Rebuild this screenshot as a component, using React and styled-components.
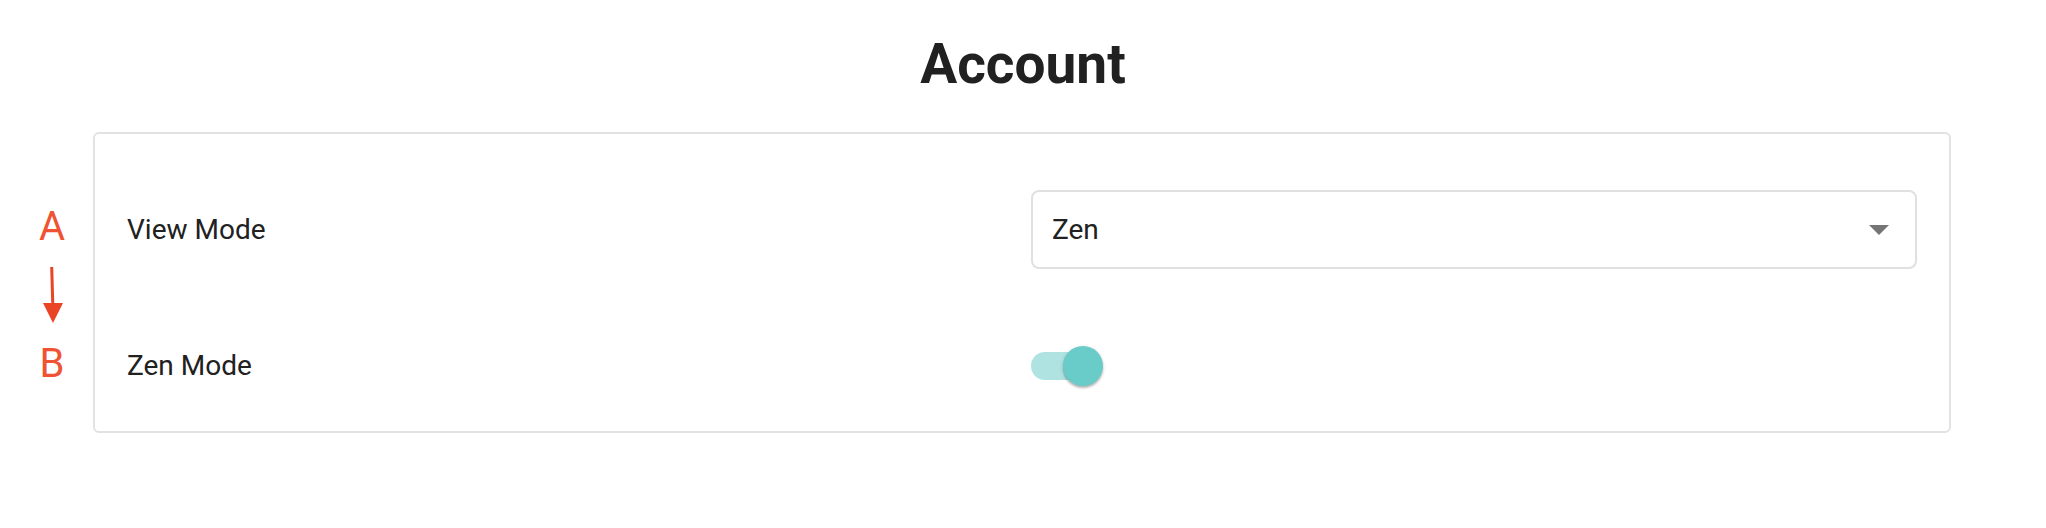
import React from "react";
import styled, { createGlobalStyle } from "styled-components";

const GlobalStyle = createGlobalStyle`
  html, body {
    margin: 0;
    padding: 0;
    background: #ffffff;
  }
  body {
    font-family: Roboto, "Liberation Sans", Arial, sans-serif;
    color: #212121;
  }
`;

const Page = styled.div`
  width: 2046px;
  min-height: 528px;
  display: flex;
  flex-direction: column;
`;

const Title = styled.h1`
  margin: 0 0 40px;
  padding-top: 37px;
  font-size: 55px;
  line-height: 1;
  font-weight: 700;
  text-align: center;
  color: #212121;
`;

const Main = styled.div`
  display: flex;
  align-items: flex-start;
  padding-right: 95px;
`;

const Gutter = styled.div`
  width: 93px;
  box-sizing: border-box;
  padding: 75px 0 0 11px;
  display: flex;
  flex-direction: column;
  align-items: center;
`;

const Marker = styled.div`
  font-size: 40px;
  line-height: 1;
  font-weight: 400;
  color: #ef5333;
`;

const Arrow = styled.svg`
  display: block;
  margin: 20px 0 21px;
`;

const Card = styled.section`
  flex: 1;
  box-sizing: border-box;
  border: 2px solid #e2e2e2;
  border-radius: 6px;
  padding: 56px 32px 45px;
  display: flex;
  flex-direction: column;
  gap: 77px;
`;

const Row = styled.div`
  display: grid;
  grid-template-columns: 1fr 1fr;
  column-gap: 18px;
  align-items: center;
`;

const Label = styled.div`
  font-size: 28px;
  line-height: 1;
  color: #212121;
`;

const Select = styled.div`
  height: 79px;
  box-sizing: border-box;
  border: 2px solid #e0e0e0;
  border-radius: 8px;
  padding: 0 26px 0 19px;
  display: flex;
  align-items: center;
  justify-content: space-between;
  font-size: 28px;
  line-height: 1;
  color: #212121;
`;

const Caret = styled.span`
  width: 0;
  height: 0;
  border-left: 10px solid transparent;
  border-right: 10px solid transparent;
  border-top: 10px solid #757575;
`;

const Switch = styled.div`
  position: relative;
  width: 72px;
  height: 40px;
`;

const Track = styled.span`
  position: absolute;
  left: 0;
  top: 6px;
  width: 66px;
  height: 28px;
  border-radius: 14px;
  background: #afe3e2;
`;

const Thumb = styled.span`
  position: absolute;
  left: 32px;
  top: 0;
  width: 40px;
  height: 40px;
  border-radius: 50%;
  background: #69ccc9;
  box-shadow: 0 2px 2px rgba(0, 0, 0, 0.22), 0 1px 4px rgba(0, 0, 0, 0.12);
`;

export default function App() {
  return (
    <>
      <GlobalStyle />
      <Page>
        <Title>Account</Title>
        <Main>
          <Gutter>
            <Marker>A</Marker>
            <Arrow width="24" height="56" viewBox="0 0 24 56">
              <line x1="11.7" y1="0" x2="12.8" y2="38" stroke="#ea4426" strokeWidth="3" />
              <polygon points="3,36 23,36 13,56" fill="#ea4426" />
            </Arrow>
            <Marker>B</Marker>
          </Gutter>
          <Card>
            <Row>
              <Label>View Mode</Label>
              <Select>
                <span>Zen</span>
                <Caret />
              </Select>
            </Row>
            <Row>
              <Label>Zen Mode</Label>
              <Switch>
                <Track />
                <Thumb />
              </Switch>
            </Row>
          </Card>
        </Main>
      </Page>
    </>
  );
}
